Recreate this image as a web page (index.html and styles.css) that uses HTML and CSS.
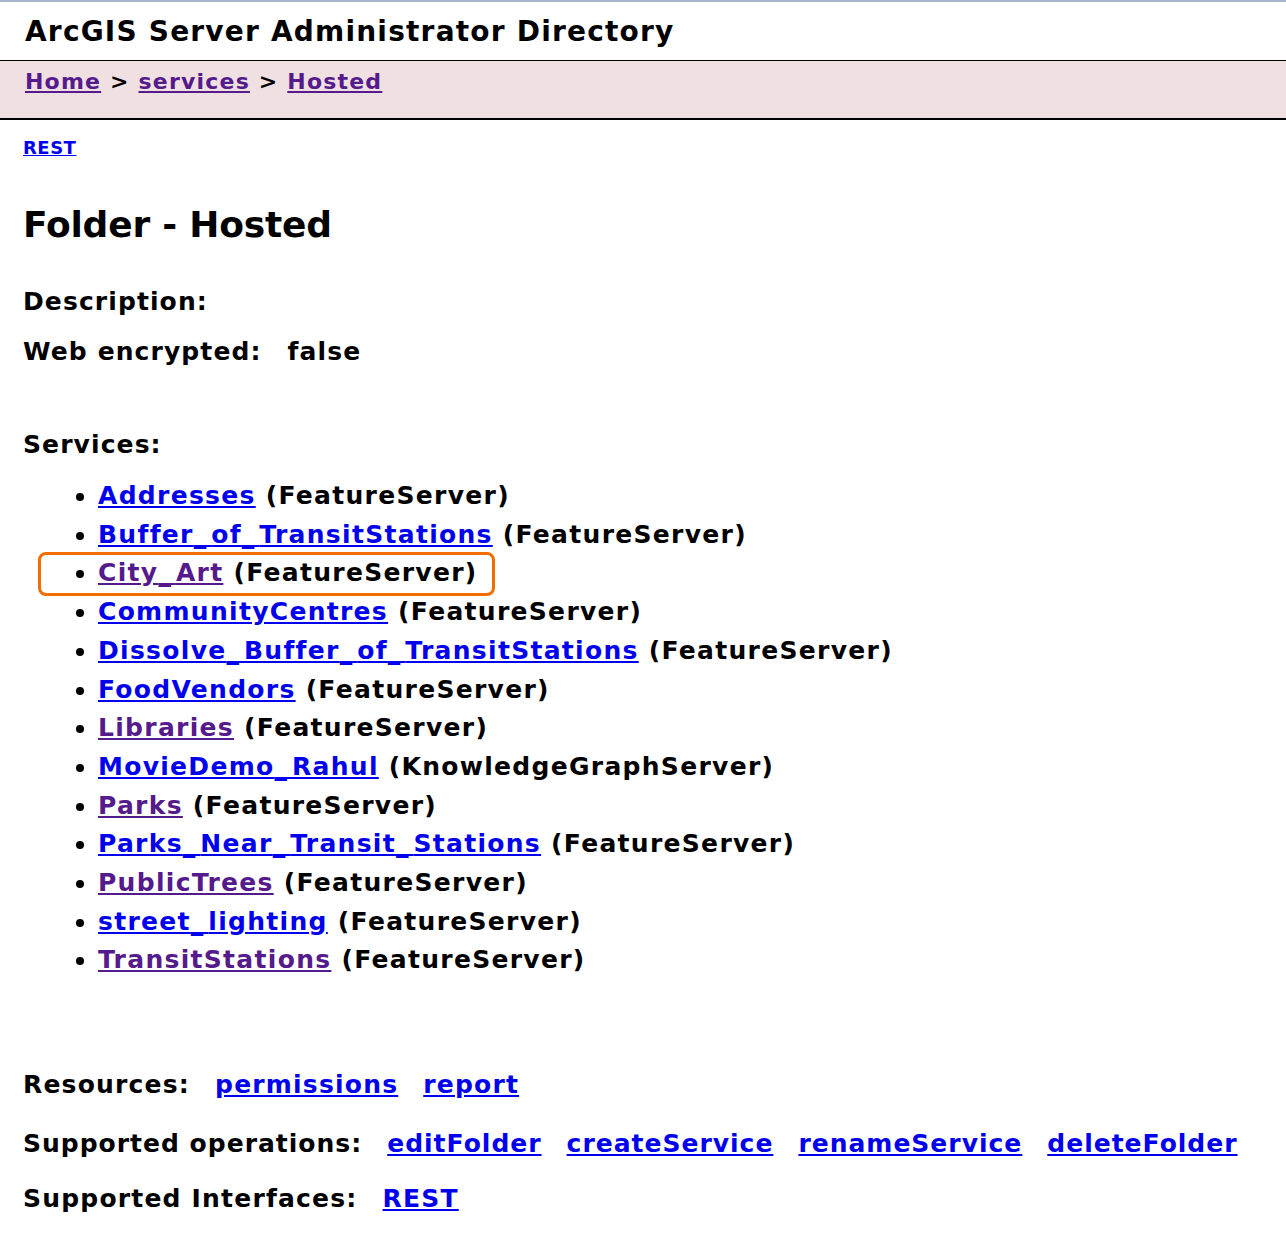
FILE: index.html
```html
<!DOCTYPE html>
<html>
<head>
<meta charset="utf-8">
<title>ArcGIS Server Administrator Directory</title>
<link rel="stylesheet" href="styles.css">
</head>
<body>
<div class="topbar"></div>
<div class="title">ArcGIS Server Administrator Directory</div>
<div class="crumbs"><a class="v" href="#">Home</a> &gt; <a class="v" href="#">services</a> &gt; <a class="v" href="#">Hosted</a></div>
<div class="content">
  <div class="rest"><a href="#">REST</a></div>
  <h2 class="folder">Folder - Hosted</h2>
  <div class="row">Description:</div>
  <div class="row"><span class="lbl">Web encrypted:</span><span class="val">false</span></div>
  <div class="row services">Services:</div>
  <ul class="list">
    <li><a href="#">Addresses</a> (FeatureServer)</li>
    <li><a href="#">Buffer<span class="u">_</span>of<span class="u">_</span>TransitStations</a> (FeatureServer)</li>
    <li class="marked"><a class="v" href="#">City<span class="u">_</span>Art</a> (FeatureServer)<span class="mark"></span></li>
    <li><a href="#">CommunityCentres</a> (FeatureServer)</li>
    <li><a href="#">Dissolve<span class="u">_</span>Buffer<span class="u">_</span>of<span class="u">_</span>TransitStations</a> (FeatureServer)</li>
    <li><a href="#">FoodVendors</a> (FeatureServer)</li>
    <li><a class="v" href="#">Libraries</a> (FeatureServer)</li>
    <li><a href="#">MovieDemo<span class="u">_</span>Rahul</a> (KnowledgeGraphServer)</li>
    <li><a class="v" href="#">Parks</a> (FeatureServer)</li>
    <li><a href="#">Parks<span class="u">_</span>Near<span class="u">_</span>Transit<span class="u">_</span>Stations</a> (FeatureServer)</li>
    <li><a class="v" href="#">PublicTrees</a> (FeatureServer)</li>
    <li><a href="#">street<span class="u">_</span>lighting</a> (FeatureServer)</li>
    <li><a class="v" href="#">TransitStations</a> (FeatureServer)</li>
  </ul>
  <div class="row links resources"><span class="lbl">Resources:</span><a href="#">permissions</a><a href="#">report</a></div>
  <div class="row links ops"><span class="lbl">Supported operations:</span><a href="#">editFolder</a><a href="#">createService</a><a href="#">renameService</a><a href="#">deleteFolder</a></div>
  <div class="row links ifaces"><span class="lbl">Supported Interfaces:</span><a href="#">REST</a></div>
</div>
</body>
</html>
```

FILE: styles.css
```css
html, body {
  margin: 0;
  padding: 0;
  background: #ffffff;
}
body {
  font-family: "DejaVu Sans", Verdana, sans-serif;
  font-weight: bold;
  color: #000000;
}
a {
  color: #0000ee;
  text-decoration: underline;
}
a.v {
  color: #551a8b;
}
.topbar {
  height: 2px;
  background: #a7b3c8;
}
.title {
  height: 56px;
  padding: 2px 0 0 25px;
  font-size: 28px;
  line-height: 56px;
  letter-spacing: 1.2px;
}
.crumbs {
  border-top: 1px solid #000;
  border-bottom: 2px solid #000;
  background: #f0e0e1;
  height: 33px;
  padding: 4px 0 20px 25px;
  font-size: 22px;
  line-height: 33px;
  letter-spacing: 1.2px;
}
.content {
  padding-left: 23px;
}
.rest {
  margin-top: 16px;
  font-size: 18px;
  line-height: 24px;
  letter-spacing: 0.5px;
}
.folder {
  margin: 43px 0 0 0;
  font-size: 36px;
  line-height: 44px;
  font-weight: bold;
  letter-spacing: -0.2px;
}
.row {
  font-size: 25px;
  line-height: 50px;
  letter-spacing: 1.1px;
}
.folder + .row {
  margin-top: 30px;
}
.services {
  margin-top: 43px;
}
.val {
  margin-left: 26px;
}
.list {
  margin: 7px 0 0 0;
  padding: 0 0 0 75px;
  font-size: 25px;
  line-height: 38.7px;
  letter-spacing: 1.3px;
}
.u {
  letter-spacing: 5px;
}
.list li {
  position: relative;
}
.mark {
  position: absolute;
  left: -60px;
  top: -2px;
  width: 451px;
  height: 38px;
  border: 3.5px solid #f26c00;
  border-radius: 8px;
}
.links {
  display: flex;
  gap: 25px;
  letter-spacing: 1px;
}
.resources {
  margin-top: 80px;
  letter-spacing: 1.2px;
}
.ops {
  margin-top: 9px;
}
.ifaces {
  margin-top: 5px;
  letter-spacing: 1.2px;
}
```
